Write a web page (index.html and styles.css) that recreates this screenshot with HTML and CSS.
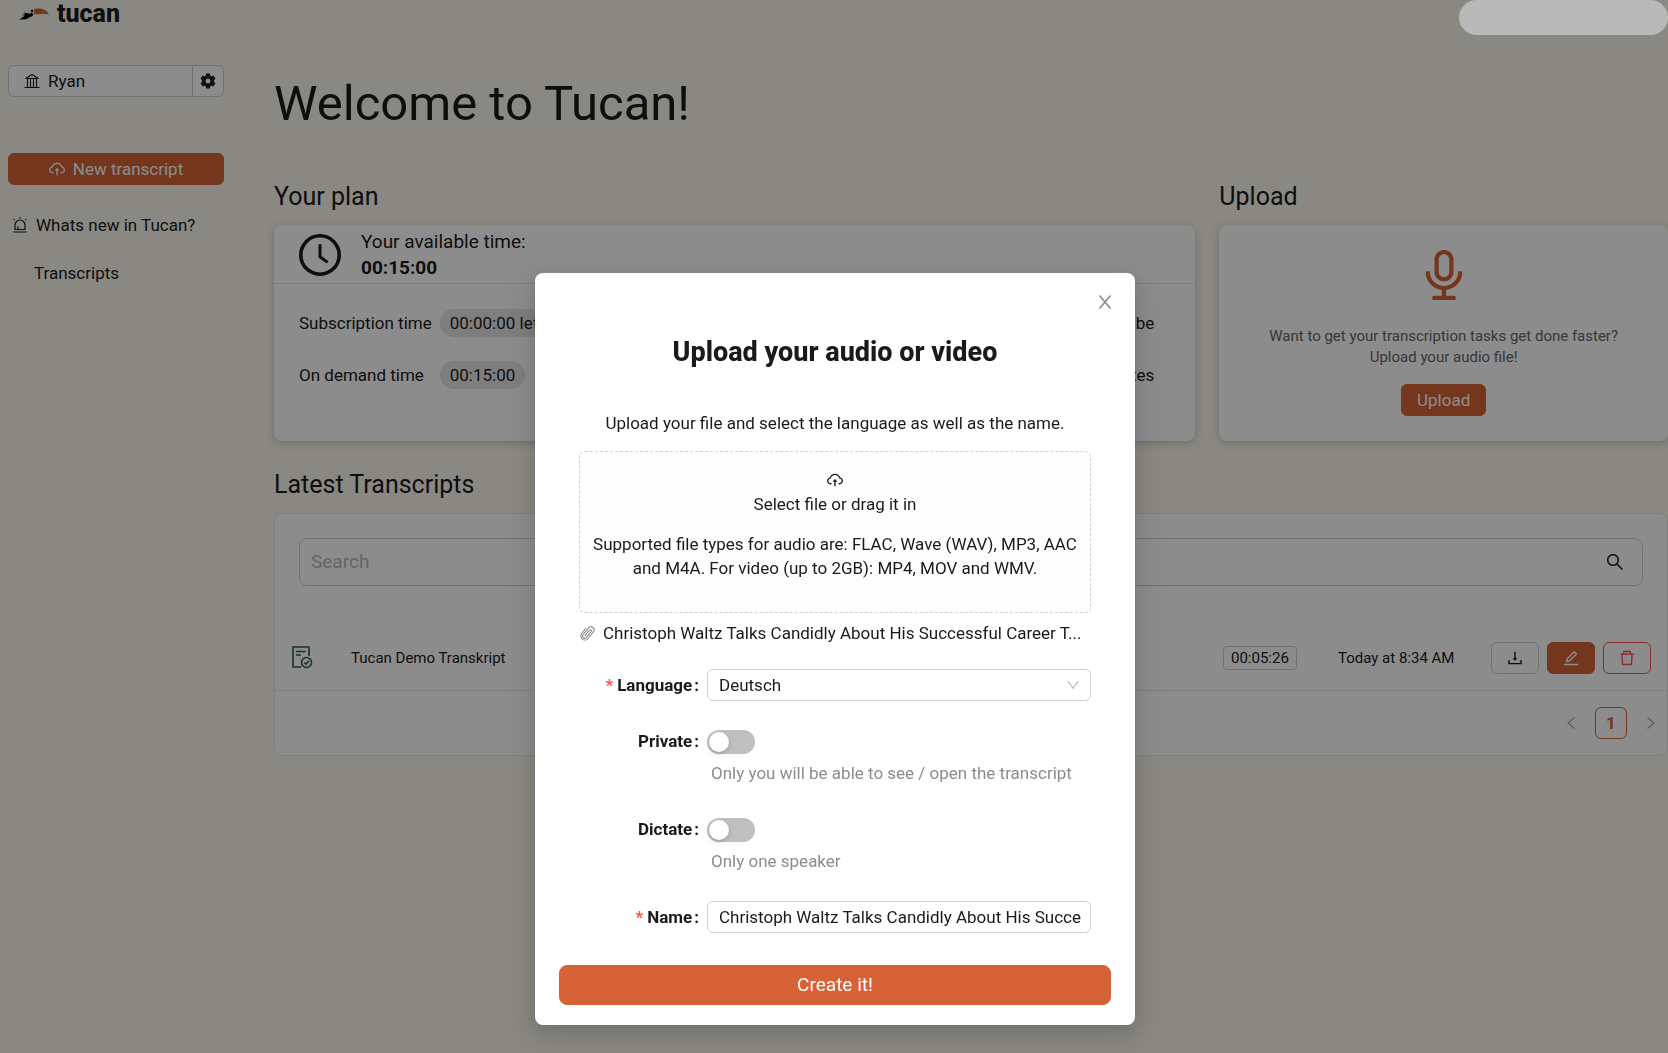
FILE: index.html
```
<!DOCTYPE html>
<html lang="en">
<head>
<meta charset="utf-8">
<title>Tucan</title>
<link rel="stylesheet" href="styles.css">
</head>
<body>
<svg class="sprite" aria-hidden="true">
  <symbol id="cloud" viewBox="64 64 896 896"><path d="M518.3 459a8 8 0 00-12.6 0l-112 141.7a7.98 7.98 0 006.3 12.9h73.9V856c0 4.4 3.6 8 8 8h60c4.4 0 8-3.6 8-8V613.7H624c6.7 0 10.4-7.7 6.3-12.9L518.3 459z"/><path d="M811.4 366.7C765.6 245.9 648.9 160 512.2 160S258.8 245.8 213 366.6C127.3 389.1 64 467.2 64 560c0 110.5 89.5 200 199.9 200H304c4.4 0 8-3.6 8-8v-60c0-4.4-3.6-8-8-8h-40.1c-33.7 0-65.4-13.4-89-37.7-23.5-24.2-36-56.8-34.9-90.6.9-26.4 9.9-51.2 26.2-72.1 16.7-21.3 40.1-36.8 66.1-43.7l37.9-9.9 13.9-36.6c8.6-22.8 20.6-44.1 35.7-63.4a245.6 245.6 0 0152.4-49.9c41.1-28.9 89.5-44.2 140-44.2s98.9 15.3 140 44.2c19.9 14 37.5 30.8 52.4 49.9 15.1 19.3 27.1 40.7 35.7 63.4l13.8 36.5 37.8 10C846.1 454.5 884 503.8 884 560c0 33.1-12.9 64.3-36.3 87.7a123.07 123.07 0 01-87.6 36.3H720c-4.4 0-8 3.6-8 8v60c0 4.4 3.6 8 8 8h40.1C870.5 760 960 670.5 960 560c0-92.7-63.1-170.7-148.6-193.3z"/></symbol>
</svg>

<div class="app">
  <aside class="sidebar">
    <a class="brand" href="#">
      <svg width="30" height="12" viewBox="0 0 30 12" aria-hidden="true"><path fill="#000" d="M0 11.500C2 10.500 4 9 6 7.500L2.500 7L6.500 6L4.500 4.500C7.500 4.500 9 6 11 5.500C12 4.500 14 5 14.500 6.500C13.500 8.500 11.500 8.500 9.500 10C7 12 3 11.500 0 11.500Z"/><circle cx="13" cy="3" r="1.200" fill="#000"/><path fill="#d66337" d="M15 1C20-.5 27 .5 30 6.500C25 4.500 20 7 15 6Z"/></svg>
      <span>tucan</span>
    </a>
    <div class="workspace">
      <button class="workspace-name" type="button">
        <svg width="16" height="16" viewBox="0 0 16 16" fill="none" stroke="currentColor" stroke-width="1.100" aria-hidden="true"><path d="M.5 14.500h15M2 5.500h12M1.500 5.500L8 1.500l6.500 4M3.500 6v8M6.500 6v8M9.500 6v8M12.500 6v8"/></svg>
        Ryan
      </button>
      <button class="workspace-settings" type="button" aria-label="Settings">
        <svg width="16" height="16" viewBox="-8 -8 16 16" fill="none" stroke="currentColor" aria-hidden="true"><circle r="4.200" stroke-width="3.600"/><path stroke-width="4" d="M0-7.500V-5M0 5v2.500M6.500-3.750L4.300-2.500M-6.500-3.750L-4.300-2.500M6.500 3.750L4.300 2.500M-6.500 3.750L-4.300 2.500"/></svg>
      </button>
    </div>
    <button class="btn primary new" type="button"><svg width="16" height="16" fill="currentColor" aria-hidden="true"><use href="#cloud"/></svg>New transcript</button>
    <nav class="menu">
      <a href="#"><svg width="16" height="16" viewBox="0 0 16 16" fill="none" stroke="currentColor" stroke-width="1.200" aria-hidden="true"><path d="M1.500 15h13M3 12.500V8a5 5 0 0 1 10 0v4.500zM6 12.500V9.500M8 .3v1.400M1.500 2l1 1M14.500 2l-1 1"/></svg>Whats new in Tucan?</a>
      <a href="#" class="plain">Transcripts</a>
    </nav>
  </aside>

  <main class="content">
    <h1>Welcome to Tucan!</h1>
    <div class="overview">
      <section class="plan">
        <h2>Your plan</h2>
        <div class="card">
          <div class="plan-head">
            <svg width="42" height="42" viewBox="64 64 896 896" fill="currentColor" aria-hidden="true"><circle cx="512" cy="512" r="410" fill="none" stroke="currentColor" stroke-width="76"/><path d="M686.700 638.600L544.100 535.500V288c0-4.400-3.600-8-8-8H488c-4.400 0-8 3.600-8 8v275.400c0 2.600 1.200 5 3.300 6.500l165.400 120.600c3.600 2.600 8.600 1.800 11.200-1.700l28.600-39c2.600-3.700 1.800-8.700-1.800-11.200z"/></svg>
            <div>Your available time:<br><strong>00:15:00</strong></div>
          </div>
          <div class="plan-body">
            <span>Subscription time</span><span class="pill">00:00:00 left</span><a href="#">Subscribe</a>
            <span>On demand time</span><span class="pill">00:15:00</span><a href="#">Buy minutes</a>
          </div>
        </div>
      </section>
      <section class="upload">
        <h2>Upload</h2>
        <div class="card upload-card">
          <svg width="50" height="50" viewBox="64 64 896 896" fill="#d66337" aria-hidden="true"><path d="M842 454c0-4.400-3.600-8-8-8h-60c-4.400 0-8 3.600-8 8 0 140.300-113.700 254-254 254S258 594.300 258 454c0-4.400-3.600-8-8-8h-60c-4.400 0-8 3.600-8 8 0 168.700 126.600 307.900 290 327.600V884H326.700c-13.700 0-24.700 14.300-24.700 32v36c0 4.400 2.800 8 6.200 8h407.600c3.400 0 6.200-3.600 6.200-8v-36c0-17.700-11-32-24.700-32H548V782.100c165.300-18 294-158 294-328.100zM512 624c93.900 0 170-75.200 170-168V232c0-92.800-76.100-168-170-168s-170 75.200-170 168v224c0 92.800 76.100 168 170 168zm-94-392c0-50.600 41.900-92 94-92s94 41.400 94 92v224c0 50.600-41.900 92-94 92s-94-41.400-94-92V232z"/></svg>
          <p>Want to get your transcription tasks get done faster?<br>Upload your audio file!</p>
          <button class="btn primary" type="button">Upload</button>
        </div>
      </section>
    </div>

    <section class="latest">
      <h2>Latest Transcripts</h2>
      <div class="list-card">
        <label class="search">
          <input type="search" placeholder="Search" aria-label="Search">
          <svg width="18" height="18" viewBox="64 64 896 896" fill="currentColor" aria-hidden="true"><path d="M909.600 854.500L649.900 594.800C690.200 542.700 712 479 712 412c0-80.200-31.300-155.400-87.900-212.100-56.600-56.700-132-87.900-212.100-87.900s-155.500 31.300-212.100 87.900C143.200 256.500 112 331.800 112 412c0 80.100 31.300 155.500 87.900 212.100C256.500 680.800 331.800 712 412 712c67 0 130.600-21.800 182.700-62l259.700 259.600a8.200 8.200 0 0011.600 0l43.600-43.500a8.200 8.200 0 000-11.600zM570.400 570.400C528 612.700 471.800 636 412 636s-116-23.300-158.400-65.600C211.300 528 188 471.800 188 412s23.300-116.100 65.600-158.400C296 211.300 352.200 188 412 188s116.100 23.200 158.400 65.600S636 352.200 636 412s-23.300 116.100-65.600 158.400z"/></svg>
        </label>
        <table>
          <tbody>
            <tr>
              <td class="status"><svg width="22" height="24" viewBox="0 0 22 24" fill="none" stroke="#2f5a4c" stroke-width="1.600" aria-label="Done"><path d="M18 10V1H2v20h8M5 5.500h9.500M5 9h5"/><circle cx="15.500" cy="16.500" r="5"/><path d="M13.200 16.500l1.700 1.700 3-3.300"/></svg></td>
              <td>Tucan Demo Transkript</td>
              <td class="length"><span class="tag">00:05:26</span></td>
              <td class="date">Today at 8:34 AM</td>
              <td class="actions"><div>
                <button class="btn" type="button" aria-label="Download"><svg width="16" height="16" viewBox="64 64 896 896" fill="currentColor"><path d="M505.700 661a8 8 0 0012.600 0l112-141.700c4.100-5.200.4-12.900-6.300-12.900h-74.100V168c0-4.400-3.600-8-8-8h-60c-4.400 0-8 3.600-8 8v338.300H400c-6.700 0-10.400 7.700-6.300 12.900l112 141.800zM878 626h-60c-4.400 0-8 3.600-8 8v154H214V634c0-4.400-3.600-8-8-8h-60c-4.400 0-8 3.600-8 8v198c0 17.700 14.300 32 32 32h684c17.700 0 32-14.300 32-32V634c0-4.400-3.600-8-8-8z"/></svg></button>
                <button class="btn primary" type="button" aria-label="Edit"><svg width="16" height="16" viewBox="64 64 896 896" fill="currentColor"><path d="M257.700 752c2 0 4-.2 6-.5L431.900 722c2-.4 3.900-1.300 5.300-2.800l423.900-423.900a9.960 9.960 0 000-14.100L694.900 114.900c-1.900-1.900-4.400-2.900-7.100-2.900s-5.200 1-7.100 2.900L256.800 538.800c-1.500 1.500-2.400 3.300-2.800 5.300l-29.500 168.200a33.500 33.500 0 009.400 29.800c6.600 6.400 14.900 9.900 23.800 9.900zm67.400-174.400L687.800 215l73.300 73.300-362.700 362.600-88.900 15.700 15.600-89zM880 836H144c-17.700 0-32 14.300-32 32v36c0 4.400 3.600 8 8 8h784c4.400 0 8-3.600 8-8v-36c0-17.700-14.300-32-32-32z"/></svg></button>
                <button class="btn danger" type="button" aria-label="Delete"><svg width="16" height="16" viewBox="64 64 896 896" fill="currentColor"><path d="M360 184h-8c4.400 0 8-3.600 8-8v8h304v-8c0 4.400 3.600 8 8 8h-8v72h72v-80c0-35.300-28.700-64-64-64H352c-35.300 0-64 28.700-64 64v80h72v-72zm504 72H160c-17.700 0-32 14.300-32 32v32c0 4.400 3.600 8 8 8h60.400l24.700 523c1.600 34.100 29.800 61 63.900 61h454c34.200 0 62.300-26.800 63.900-61l24.700-523H888c4.400 0 8-3.600 8-8v-32c0-17.700-14.300-32-32-32zM731.300 840H292.700l-24.200-512h487l-24.200 512z"/></svg></button>
              </div></td>
            </tr>
          </tbody>
        </table>
        <nav class="pages" aria-label="Pages">
          <button type="button" aria-label="Previous" disabled><svg width="8" height="12" viewBox="0 0 8 12" fill="none" stroke="currentColor" stroke-width="1.200"><path d="M7.500.500L1 6l6.500 5.500"/></svg></button>
          <button type="button" class="current">1</button>
          <button type="button" aria-label="Next" disabled><svg width="8" height="12" viewBox="0 0 8 12" fill="none" stroke="currentColor" stroke-width="1.200"><path d="M.500.500L7 6l-6.500 5.500"/></svg></button>
        </nav>
      </div>
    </section>
  </main>
</div>

<div class="mask">
  <form class="modal" role="dialog" aria-labelledby="modal-title">
    <button class="close" type="button" aria-label="Close"><svg width="18" height="18" viewBox="64 64 896 896" fill="currentColor"><path d="M563.800 512l262.500-312.900c4.400-5.200.7-13.100-6.100-13.100h-79.800c-4.700 0-9.200 2.100-12.300 5.700L511.600 449.800 295.100 191.700c-3-3.600-7.500-5.700-12.300-5.700H203c-6.800 0-10.500 7.900-6.100 13.100L459.400 512 196.900 824.900A7.950 7.950 0 00203 838h79.800c4.700 0 9.200-2.100 12.300-5.700l216.500-258.100 216.500 258.100c3 3.600 7.500 5.700 12.300 5.700h79.800c6.800 0 10.500-7.900 6.100-13.100L563.800 512z"/></svg></button>
    <h2 id="modal-title">Upload your audio or video</h2>
    <div class="fields">
      <p class="intro">Upload your file and select the language as well as the name.</p>
      <button class="dropzone" type="button">
        <svg width="16" height="16" fill="currentColor" aria-hidden="true"><use href="#cloud"/></svg>
        <span>Select file or drag it in</span>
        <span class="types">Supported file types for audio are: FLAC, Wave (WAV), MP3, AAC and M4A. For video (up to 2GB): MP4, MOV and WMV.</span>
      </button>
      <div class="file">
        <svg width="16" height="16" viewBox="-1 0 17 16" fill="none" stroke="currentColor" stroke-width="1.100" aria-hidden="true"><path d="M5 11L10 5a1.200 1.200 0 0 1 1.900 1.500l-5 6.200a2.300 2.300 0 0 1-3.600-2.900l5.800-7.200a3.300 3.300 0 0 1 5.100 4.200L8.600 13.800a4.300 4.300 0 0 1-6.700-5.400l4.600-5.700"/></svg>
        <span>Christoph Waltz Talks Candidly About His Successful Career T...</span>
      </div>
      <div class="field">
        <label for="language" class="required">Language</label>
        <div class="select">
          <select id="language"><option>Deutsch</option></select>
          <svg width="14" height="14" viewBox="64 64 896 896" fill="currentColor" aria-hidden="true"><path d="M884 256h-75c-5.100 0-9.900 2.500-12.900 6.600L512 654.200 227.900 262.600c-3-4.100-7.800-6.600-12.900-6.600h-75c-6.500 0-10.300 7.400-6.500 12.700l352.600 486.100c12.800 17.600 39 17.600 51.700 0l352.600-486.100c3.900-5.300.1-12.700-6.400-12.700z"/></svg>
        </div>
      </div>
      <div class="field">
        <label for="private">Private</label>
        <div class="switch-box"><input class="switch" id="private" type="checkbox"><span class="hint">Only you will be able to see / open the transcript</span></div>
      </div>
      <div class="field">
        <label for="dictate">Dictate</label>
        <div class="switch-box"><input class="switch" id="dictate" type="checkbox"><span class="hint">Only one speaker</span></div>
      </div>
      <div class="field">
        <label for="name" class="required">Name</label>
        <input class="text" id="name" type="text" value="Christoph Waltz Talks Candidly About His Succe">
      </div>
    </div>
    <button class="btn primary create" type="submit">Create it!</button>
  </form>
</div>
<div class="account"></div>
</body>
</html>
```
FILE: styles.css
```
* { box-sizing: border-box; }

body {
  margin: 0;
  min-height: 100vh;
  background: #faf7ed;
  color: #1a1a1a;
  font: 17px/24px Roboto, "Liberation Sans", sans-serif;
}

button, input, select { font: inherit; color: inherit; }
button { cursor: pointer; }
a { color: inherit; text-decoration: none; }
h1, h2, p { margin: 0; font-weight: 400; }
svg { flex: none; display: block; }
.sprite { position: absolute; width: 0; height: 0; }

.app { display: flex; gap: 50px; }

/* Sidebar */
.sidebar {
  flex: none;
  width: 224px;
  padding-left: 8px;
}
.brand {
  display: flex;
  align-items: center;
  gap: 8px;
  height: 27px;
  padding-left: 11px;
  font-size: 25px;
  font-weight: 800;
}
.workspace {
  display: flex;
  height: 32px;
  margin-top: 38px;
  border: 1px solid #d0d0d0;
  border-radius: 6px;
  background: #fff;
}
.workspace button {
  display: flex;
  align-items: center;
  border: 0;
  background: none;
}
.workspace-name { flex: 1; gap: 8px; padding: 0 15px; }
.workspace .workspace-settings {
  width: 31px;
  justify-content: center;
  padding: 0;
  border-left: 1px solid #d0d0d0;
}

.btn {
  display: flex;
  align-items: center;
  justify-content: center;
  gap: 8px;
  height: 32px;
  padding: 0 15px;
  border: 1px solid #d0d0d0;
  border-radius: 6px;
  background: #fff;
}
.btn.primary { border-color: #d66337; background: #d66337; color: #fff; }
.btn.danger { border-color: #ff4d4f; color: #ff4d4f; }
.new { width: 100%; margin-top: 56px; }

.menu { padding: 16px 0 0 4px; }
.menu a { display: flex; align-items: center; gap: 8px; height: 48px; }
.menu .plain { padding-left: 22px; }

/* Content */
.content { flex: 1; min-width: 0; }
h1 { padding-top: 72px; font-size: 49px; line-height: 64px; }
.content h2 { font-size: 25px; line-height: 32px; }
.overview {
  display: grid;
  grid-template-columns: repeat(3, 1fr);
  column-gap: 24px;
  margin-top: 45px;
}
.overview section { display: flex; flex-direction: column; gap: 12px; }
.plan { grid-column: span 2; }
.card {
  height: 216px;
  border-radius: 8px;
  background: #fff;
  box-shadow: 0 2px 8px rgba(0, 0, 0, .2);
}
.plan-head {
  display: flex;
  align-items: center;
  gap: 20px;
  height: 59px;
  padding: 2px 25px 0;
  border-bottom: 1px solid #e8e8e8;
  font-size: 19px;
  line-height: 26px;
}
.plan-body {
  display: grid;
  grid-template-columns: auto 1fr auto;
  align-items: center;
  gap: 24px 8px;
  padding: 25px 41px 0 25px;
}
.pill {
  justify-self: start;
  padding: 2px 10px;
  border-radius: 14px;
  background: #e6e6e6;
}
.plan-body a { text-align: right; }
.upload-card {
  display: flex;
  flex-direction: column;
  align-items: center;
  padding-top: 25px;
}
.upload-card p {
  margin: 26px 0 16px;
  color: #666;
  font-size: 15px;
  line-height: 21px;
  text-align: center;
}

/* Transcripts */
.latest { margin-top: 28px; }
.list-card {
  margin-top: 12px;
  border: 1px solid #e8e8e8;
  border-radius: 8px;
  background: #fff;
}
.search {
  display: flex;
  align-items: center;
  height: 48px;
  margin: 24px;
  padding: 0 18px 0 11px;
  border: 1px solid #d0d0d0;
  border-radius: 8px;
}
.search input {
  flex: 1;
  min-width: 0;
  padding: 0;
  border: 0;
  outline: 0;
  background: none;
  font-size: 19px;
}
.search input::placeholder { color: #b8b8b8; }
table {
  width: 100%;
  margin-top: 40px;
  border-collapse: collapse;
  font-size: 15px;
}
td { height: 64px; padding: 0; border-bottom: 1px solid #e8e8e8; }
.status { width: 76px; padding-left: 16px; }
.length { width: 115px; }
.date { width: 153px; }
.actions { width: 176px; }
.actions div { display: flex; gap: 8px; }
.actions .btn { width: 48px; padding: 0; }
.tag {
  display: inline-block;
  padding: 0 7px;
  border: 1px solid #d0d0d0;
  border-radius: 4px;
  line-height: 22px;
}
.pages {
  display: flex;
  justify-content: flex-end;
  gap: 8px;
  padding: 16px 0;
}
.pages button {
  display: grid;
  place-items: center;
  width: 32px;
  height: 32px;
  padding: 0;
  border: 0;
  border-radius: 6px;
  background: none;
  color: #a8a8a8;
}
.pages .current { border: 1px solid #d66337; color: #d66337; font-weight: 700; }

/* Upload dialog */
.mask {
  position: fixed;
  inset: 0;
  display: flex;
  align-items: flex-start;
  justify-content: center;
  padding-top: 273px;
  overflow: auto;
  background: rgba(0, 0, 0, .45);
}
.modal {
  position: relative;
  width: 600px;
  max-width: 100%;
  margin-left: 2px;
  padding: 61px 24px 20px;
  border-radius: 8px;
  background: #fff;
  box-shadow: 0 6px 16px rgba(0, 0, 0, .08), 0 9px 28px 8px rgba(0, 0, 0, .1);
}
.close {
  position: absolute;
  top: 18px;
  right: 19px;
  display: grid;
  place-items: center;
  width: 22px;
  height: 22px;
  padding: 0;
  border: 0;
  background: none;
  color: #8c8c8c;
}
.modal h2 {
  font-size: 27px;
  line-height: 36px;
  font-weight: 800;
  text-align: center;
}
.fields { padding: 41px 20px 0; }
.intro { text-align: center; }
.dropzone {
  display: flex;
  flex-direction: column;
  align-items: center;
  width: 100%;
  margin-top: 16px;
  padding: 20px 8px 32px;
  border: 1px dashed #d0d0d0;
  border-radius: 6px;
  background: #fefefe;
}
.dropzone span { margin-top: 4px; }
.dropzone .types { margin-top: 16px; }
.file { display: flex; align-items: center; gap: 8px; margin-top: 8px; }
.file svg { color: #8c8c8c; }
.file span { overflow: hidden; white-space: nowrap; text-overflow: ellipsis; }
.field {
  display: grid;
  grid-template-columns: 1fr 3fr;
  margin-top: 24px;
}
.field label {
  padding-right: 8px;
  line-height: 32px;
  font-weight: 700;
  text-align: right;
}
.field label::after { content: ":"; margin-left: 2px; }
.required::before { content: "*"; margin-right: 4px; color: #ff4d4f; }
.select { display: grid; align-items: center; }
.select > * { grid-area: 1 / 1; }
.select svg { justify-self: end; margin-right: 11px; color: #bfbfbf; pointer-events: none; }
.select select, .text {
  width: 100%;
  height: 32px;
  padding: 0 8px 0 11px;
  border: 1px solid #d0d0d0;
  border-radius: 6px;
  background: #fff;
  appearance: none;
}
.switch-box { padding: 5px 0 4px; }
.switch {
  display: block;
  width: 48px;
  height: 24px;
  margin: 0;
  padding: 2px;
  border-radius: 12px;
  background: #bfbfbf;
  appearance: none;
}
.switch::before {
  content: "";
  display: block;
  width: 20px;
  height: 20px;
  border-radius: 50%;
  background: #fff;
  box-shadow: 0 2px 4px rgba(0, 35, 11, .2);
}
.switch:checked { background: #d66337; }
.switch:checked::before { margin-left: auto; }
.hint { display: block; margin: 7px 0 0 4px; color: #8c8c8c; }
.create {
  width: 100%;
  height: 40px;
  margin-top: 32px;
  border-radius: 8px;
  font-size: 19px;
}

.account {
  position: fixed;
  top: 0;
  right: 0;
  width: 209px;
  height: 35px;
  border-radius: 18px;
  background: #b8b8b8;
}
```
